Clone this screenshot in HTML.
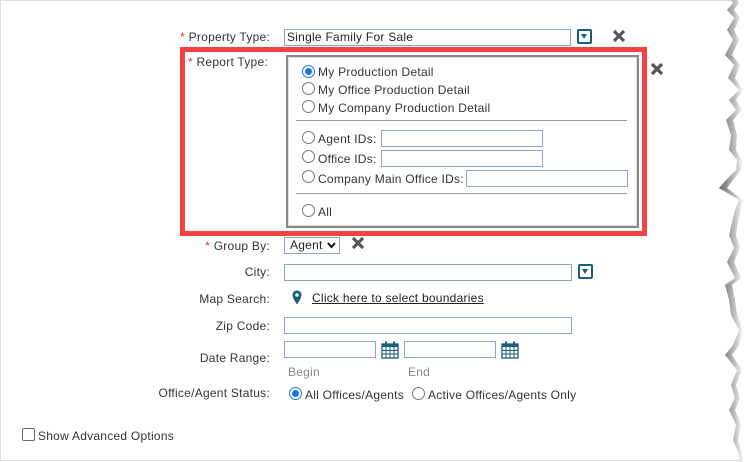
<!DOCTYPE html>
<html><head><style>
body{margin:0;width:744px;height:462px;position:relative;overflow:hidden;background:#fff;font-family:"Liberation Sans",Tahoma,sans-serif;font-size:12px;letter-spacing:0.25px;color:#333}
.a{position:absolute;white-space:nowrap}
.lbl{position:absolute;text-align:right;width:270px;left:0}
.req{color:#e33}
.in{position:absolute;border:1px solid #8fa7bd;height:15px;background:#fff;box-sizing:content-box}
.rad{position:absolute;width:11px;height:11px;border:1px solid #777;border-radius:50%;background:#fff}
.rad.on{border-color:#1a73e8}
.rad.on::after{content:"";position:absolute;left:2px;top:2px;width:7px;height:7px;border-radius:50%;background:#1a73e8}
.dd{position:absolute;width:11px;height:11px;border:2px solid #1b5e7b;border-radius:2px;background:#fff}
.dd::after{content:"";position:absolute;left:2px;top:3px;border-left:3.5px solid transparent;border-right:3.5px solid transparent;border-top:5px solid #1b5e7b}
.sep{position:absolute;height:1px;background:#999;left:296px;width:331px}
</style></head><body>
<div style="position:absolute;left:0;top:0;width:744px;height:461px;border-top:1px solid #ddd;border-left:1px solid #ddd;border-bottom:1px solid #ddd;box-sizing:border-box"></div>

<div class="lbl" style="top:30px"><span class="req">*</span> Property Type:</div>
<div class="in" style="left:284px;top:29px;font-size:12px;color:#222;line-height:15px;padding-left:2px;width:283px">Single Family For Sale</div>
<div class="dd" style="left:577px;top:29px"></div>
<svg class="a" style="left:612px;top:29px" width="14" height="14" viewBox="0 0 14 14"><path d="M2 2L12 12M12 2L2 12" stroke="#555" stroke-width="3.2"/></svg>

<div class="a" style="left:180px;top:47px;width:457px;height:179px;border:5px solid #f44242"></div>
<div class="a" style="left:188px;top:55px;color:#333"><span class="req">*</span> Report Type:</div>
<div class="a" style="left:286px;top:55px;width:349px;height:169px;border:2px solid #888;box-shadow:inset 0 0 0 1px #ddd"></div>

<div class="rad on" style="left:302px;top:65px"></div><div class="a" style="left:318px;top:65px">My Production Detail</div>
<div class="rad" style="left:302px;top:82px"></div><div class="a" style="left:318px;top:83px">My Office Production Detail</div>
<div class="rad" style="left:302px;top:100px"></div><div class="a" style="left:318px;top:101px">My Company Production Detail</div>
<div class="sep" style="top:120px"></div>
<div class="rad" style="left:302px;top:131px"></div><div class="a" style="left:318px;top:132px">Agent IDs:</div>
<div class="in" style="left:381px;top:130px;width:160px"></div>
<div class="rad" style="left:302px;top:150px"></div><div class="a" style="left:318px;top:152px">Office IDs:</div>
<div class="in" style="left:381px;top:150px;width:160px"></div>
<div class="rad" style="left:302px;top:170px"></div><div class="a" style="left:318px;top:172px">Company Main Office IDs:</div>
<div class="in" style="left:466px;top:170px;width:160px"></div>
<div class="sep" style="top:193px"></div>
<div class="rad" style="left:302px;top:204px"></div><div class="a" style="left:318px;top:205px">All</div>
<svg class="a" style="left:650px;top:62px" width="14" height="14" viewBox="0 0 14 14"><path d="M2 2L12 12M12 2L2 12" stroke="#555" stroke-width="3.2"/></svg>

<div class="lbl" style="top:239px"><span class="req">*</span> Group By:</div>
<div class="in" style="left:284px;top:237px;width:54px;line-height:15px;color:#222"><span style="padding-left:5px">Agent</span><svg style="position:absolute;left:42px;top:4px" width="9" height="7"><path d="M1 1L4.5 5L8 1" stroke="#111" stroke-width="2" fill="none"/></svg></div>
<svg class="a" style="left:351px;top:236px" width="14" height="14" viewBox="0 0 14 14"><path d="M2 2L12 12M12 2L2 12" stroke="#555" stroke-width="3.2"/></svg>

<div class="lbl" style="top:265px">City:</div>
<div class="in" style="left:284px;top:264px;width:286px"></div>
<div class="dd" style="left:578px;top:264px"></div>

<div class="lbl" style="top:292px">Map Search:</div>
<svg class="a" style="left:292px;top:290px" width="10" height="15" viewBox="0 0 10 15"><path d="M5 0.5C2.3 0.5 0.5 2.5 0.5 5C0.5 8 5 14.5 5 14.5C5 14.5 9.5 8 9.5 5C9.5 2.5 7.7 0.5 5 0.5Z" fill="#1b5e7b"/><circle cx="5" cy="5" r="1.8" fill="#fff"/></svg>
<div class="a" style="left:312px;top:291px;color:#222;text-decoration:underline">Click here to select boundaries</div>

<div class="lbl" style="top:319px">Zip Code:</div>
<div class="in" style="left:284px;top:317px;width:286px"></div>

<div class="lbl" style="top:351px">Date Range:</div>
<div class="in" style="left:284px;top:341px;width:90px"></div>
<div class="in" style="left:404px;top:341px;width:90px"></div>
<svg class="a" style="left:381px;top:341px" width="18" height="18" viewBox="0 0 18 18"><rect x="1" y="3" width="16" height="14" fill="#fff" stroke="#1b5e7b" stroke-width="1.3"/><rect x="1" y="3" width="16" height="3" fill="#1b5e7b"/><path d="M1 9.5H17M1 13H17M5 6V17M9 6V17M13 6V17" stroke="#1b5e7b" stroke-width="1"/><rect x="4" y="0.5" width="2" height="4" fill="#1b5e7b"/><rect x="12" y="0.5" width="2" height="4" fill="#1b5e7b"/></svg>
<svg class="a" style="left:501px;top:341px" width="18" height="18" viewBox="0 0 18 18"><rect x="1" y="3" width="16" height="14" fill="#fff" stroke="#1b5e7b" stroke-width="1.3"/><rect x="1" y="3" width="16" height="3" fill="#1b5e7b"/><path d="M1 9.5H17M1 13H17M5 6V17M9 6V17M13 6V17" stroke="#1b5e7b" stroke-width="1"/><rect x="4" y="0.5" width="2" height="4" fill="#1b5e7b"/><rect x="12" y="0.5" width="2" height="4" fill="#1b5e7b"/></svg>
<div class="a" style="left:288px;top:365px;color:#888">Begin</div>
<div class="a" style="left:408px;top:365px;color:#888">End</div>

<div class="lbl" style="top:386px">Office/Agent Status:</div>
<div class="rad on" style="left:289px;top:387px"></div><div class="a" style="left:305px;top:388px">All Offices/Agents</div>
<div class="rad" style="left:412px;top:387px"></div><div class="a" style="left:428px;top:388px">Active Offices/Agents Only</div>

<div class="a" style="left:22px;top:428px;width:11px;height:11px;border:1px solid #666;border-radius:2px"></div>
<div class="a" style="left:38px;top:429px">Show Advanced Options</div>

<svg class="a" style="left:700px;top:0" width="44" height="462" viewBox="0 0 44 462">
<defs><linearGradient id="g" x1="0" x2="1"><stop offset="0" stop-color="#666"/><stop offset="0.6" stop-color="#bbb"/><stop offset="1" stop-color="#fff"/></linearGradient></defs>
<path d="M44 0L44 462L40 462L38 452L33 440L36 425L29 410L35 398L31 385L37 370L25 355L33 345L39 330L31 315L29 300L25 285L35 278L27 262L34 248L29 235L32 222L35 210L39 200L19 188L26 180L36 170L37 160L29 150L31 135L26 120L36 110L29 100L39 90L28 78L34 65L25 55L33 40L27 30L34 18L27 10L33 3L31 0Z" fill="url(#g)"/>
<path d="M44 0L44 462L43 462L42 452L38 440L41 425L35 410L40 398L36 385L42 370L32 355L39 345L43 330L37 315L35 300L32 285L41 278L34 262L40 248L36 235L38 222L41 210L43 200L27 188L33 180L41 170L42 160L36 150L37 135L33 120L42 110L36 100L43 90L35 78L40 65L32 55L39 40L34 30L40 18L34 10L39 3L38 0Z" fill="#fff"/>
</svg>
</body></html>
